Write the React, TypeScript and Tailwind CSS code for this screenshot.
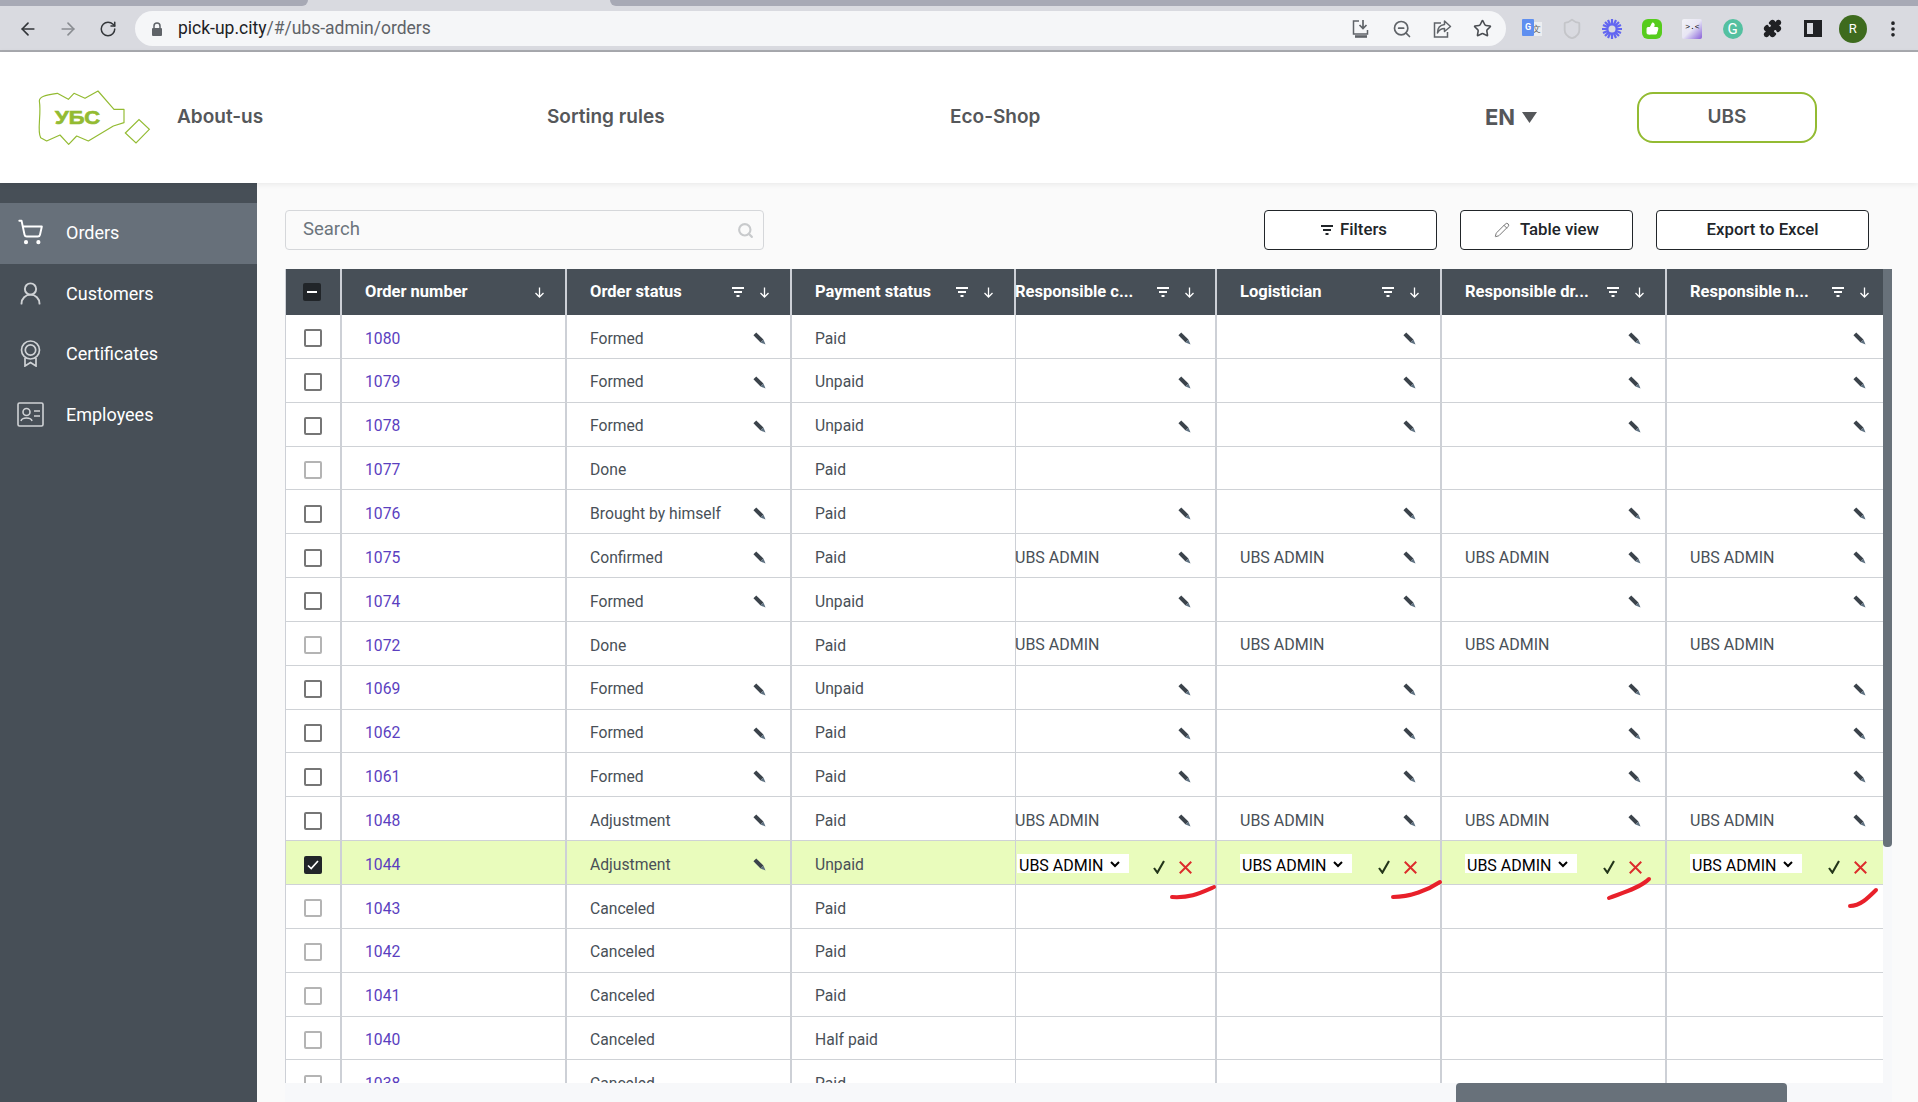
import React from "react";
import { ArrowLeft, ArrowRight, RotateCw, ZoomOut, Star, Search, ShoppingCart, UserRound, Shield, ThumbsUp, Puzzle, MoreVertical, Pencil } from "lucide-react";

type Row = { n: string; s: string; p: string; a?: boolean; edit: boolean; off?: boolean; sel?: boolean };
const rows: Row[] = [
  { n: "1080", s: "Formed", p: "Paid", edit: true },
  { n: "1079", s: "Formed", p: "Unpaid", edit: true },
  { n: "1078", s: "Formed", p: "Unpaid", edit: true },
  { n: "1077", s: "Done", p: "Paid", edit: false, off: true },
  { n: "1076", s: "Brought by himself", p: "Paid", edit: true },
  { n: "1075", s: "Confirmed", p: "Paid", a: true, edit: true },
  { n: "1074", s: "Formed", p: "Unpaid", edit: true },
  { n: "1072", s: "Done", p: "Paid", a: true, edit: false, off: true },
  { n: "1069", s: "Formed", p: "Unpaid", edit: true },
  { n: "1062", s: "Formed", p: "Paid", edit: true },
  { n: "1061", s: "Formed", p: "Paid", edit: true },
  { n: "1048", s: "Adjustment", p: "Paid", a: true, edit: true },
  { n: "1044", s: "Adjustment", p: "Unpaid", edit: true, sel: true },
  { n: "1043", s: "Canceled", p: "Paid", edit: false, off: true },
  { n: "1042", s: "Canceled", p: "Paid", edit: false, off: true },
  { n: "1041", s: "Canceled", p: "Paid", edit: false, off: true },
  { n: "1040", s: "Canceled", p: "Half paid", edit: false, off: true },
  { n: "1038", s: "Canceled", p: "Paid", edit: false, off: true },
];

const PencilSolid = () => (
  <svg width="13" height="13" viewBox="0 0 12 12" className="shrink-0">
    <path d="M0.4 3 L3 0.4 L9.6 7 L7 9.6 Z" fill="#3b434b" />
    <path d="M9.6 7 L11.6 11.6 L7 9.6 Z" fill="#5d7080" />
  </svg>
);
const FilterIcon = () => (
  <svg width="12" height="10" viewBox="0 0 12 10" className="shrink-0">
    <path d="M0 1h12M2 5h8M4.5 9h3" stroke="currentColor" strokeWidth="1.8" />
  </svg>
);
const DownArrow = () => (
  <svg width="11" height="11" viewBox="0 0 11 11" fill="none" className="shrink-0">
    <path d="M5.5 0.5V10M1.5 6l4 4 4-4" stroke="currentColor" strokeWidth="1.3" />
  </svg>
);
const Check = ({ sel, off }: { sel?: boolean; off?: boolean }) =>
  sel ? (
    <div className="w-[18px] h-[18px] rounded-[2px] bg-[#212529] flex items-center justify-center">
      <svg width="12" height="10" viewBox="0 0 12 10" fill="none"><path d="M1 5.5 L4.2 8.5 L11 1" stroke="#fff" strokeWidth="1.7" /></svg>
    </div>
  ) : (
    <div className={`w-[18px] h-[18px] rounded-[2px] border-2 bg-white ${off ? "border-[#b4b4b4]" : "border-[#767676]"}`} />
  );

const cols = [
  { t: "Order number", w: "w-[225px]", filter: false },
  { t: "Order status", w: "w-[225px]", filter: true },
  { t: "Payment status", w: "w-[224px]", filter: true },
  { t: "Responsible c...", w: "w-[201px]", filter: true, flush: true },
  { t: "Logistician", w: "w-[225px]", filter: true },
  { t: "Responsible dr...", w: "w-[225px]", filter: true },
  { t: "Responsible n...", w: "w-[225px]", filter: true },
];

const AdminCell = ({ r, w, flush }: { r: Row; w: string; flush?: boolean }) => {
  if (r.sel) {
    return (
      <div className={`${w} shrink-0 h-full border-r-2 border-[#cdd0d6] flex items-center justify-between pt-[4px] pr-[23px] ${flush ? "pl-px" : "pl-[23px]"}`}>
        <div className="w-[112px] h-[19px] bg-white -mt-[2px]">
          <select defaultValue="UBS ADMIN" className="-ml-[2px] w-[108px] h-[19px] bg-transparent text-black text-[16px] leading-[19px] border-0 outline-none">
            <option>UBS ADMIN</option>
          </select>
        </div>
        <div className="flex items-center gap-[14px] mt-[5px]">
          <svg width="12" height="14" viewBox="0 0 12 14" fill="none"><path d="M1 8 L4.4 12.6 L11 1" stroke="#23351a" strokeWidth="2.1" /></svg>
          <svg width="13" height="13" viewBox="0 0 12 12" fill="none"><path d="M0.7 0.7 L11.3 11.3 M11.3 0.7 L0.7 11.3" stroke="#dc2b2b" strokeWidth="1.8" /></svg>
        </div>
      </div>
    );
  }
  return (
    <div className={`${w} shrink-0 h-full border-r-2 border-[#cdd0d6] flex items-center justify-between pt-[4px] pr-[24px] ${flush ? "pl-0" : "pl-[23px]"}`}>
      <span className={flush ? "-ml-px" : ""}>{r.a ? "UBS ADMIN" : ""}</span>
      {r.edit && <PencilSolid />}
    </div>
  );
};

const Burst = () => (
  <svg width="20" height="20" viewBox="0 0 20 20" stroke="#6366f1" strokeWidth="2.2">
    <path d="M10 0v20M0 10h20M3 3l14 14M17 3L3 17M1 6l18 8M19 6L1 14M6 1l8 18M14 1L6 19" />
    <circle cx="10" cy="10" r="3.5" fill="#d9dae0" stroke="none" />
  </svg>
);

const InstallIcon = () => (
  <svg width="20" height="20" viewBox="0 0 20 20" fill="none" stroke="#5f6368" strokeWidth="1.5">
    <path d="M8 2H2.5v13h14V11" />
    <path d="M12 1v8M8.5 6l3.5 3.5L15.5 6" strokeWidth="1.7" />
    <path d="M4 17.5h12" strokeWidth="2.6" />
  </svg>
);
const ShareIcon = () => (
  <svg width="20" height="20" viewBox="0 0 20 20" fill="none" stroke="#5f6368" strokeWidth="1.5">
    <path d="M9 4H2.5v14h13v-5" />
    <path d="M12.5 2l6 5.5-6 5V9.5C9 9.5 7 11 5.5 14c0-5 2.5-8 7-8.5z" strokeLinejoin="round" />
  </svg>
);

const toolbarIcon = "w-[40.1px] h-[40px] flex items-center justify-center shrink-0";

function Chrome() {
  return (
    <div className="h-[52px] bg-[#d9dae0] border-b-2 border-[#a9abb0] relative shrink-0">
      <div className="h-[6px] flex">
        <div className="w-[308px] bg-[#a7a9b5] rounded-br-[8px]" />
        <div className="w-[302px]" />
        <div className="flex-1 bg-[#a7a9b5] rounded-bl-[8px]" />
      </div>
      <div className="flex items-center h-[35px] mt-[5px] pl-[8px]">
        <div className={"w-[40px] flex justify-center"}><ArrowLeft size={20} color="#33363a" strokeWidth={2} /></div>
        <div className={"w-[40px] flex justify-center"}><ArrowRight size={20} color="#8a8d92" strokeWidth={2} /></div>
        <div className={"w-[40px] flex justify-center"}><RotateCw size={18} color="#33363a" strokeWidth={2} /></div>
        <div className="ml-[7px] w-[1371px] h-[35px] rounded-full bg-[#f5f6f8] flex items-center pl-[16px] shrink-0">
          <svg width="12" height="14" viewBox="0 0 12 14" className="shrink-0">
            <path d="M3 6V4a3 3 0 016 0v2" fill="none" stroke="#5f6368" strokeWidth="1.5" />
            <rect x="1" y="6" width="10" height="8" rx="1" fill="#5f6368" />
          </svg>
          <span className="ml-[15px] text-[17.5px] font-['Roboto',sans-serif] text-[#5f6368]">
            <span className="text-[#202124]">pick-up.city</span>/#/ubs-admin/orders
          </span>
          <div className="ml-auto flex items-center pr-[3px]">
            <div className="w-[40.5px] flex justify-center"><InstallIcon /></div>
            <div className="w-[40.5px] flex justify-center"><ZoomOut size={20} color="#5f6368" /></div>
            <div className="w-[40.5px] flex justify-center"><ShareIcon /></div>
            <div className="w-[40.5px] flex justify-center"><Star size={19} color="#4a4d52" strokeWidth={2} /></div>
          </div>
        </div>
        <div className="flex items-center pl-[6px] shrink-0">
          <div className={toolbarIcon}>
            <div className="relative w-[20px] h-[20px]">
              <div className="absolute right-0 top-[3px] w-[12px] h-[14px] bg-[#eceef1] text-[9px] leading-[14px] text-center text-[#666]">文</div>
              <div className="absolute left-0 top-0 w-[12px] h-[17px] bg-[#5f8ff0] rounded-[1px] text-[9px] leading-[17px] text-center font-bold text-white font-['Roboto',sans-serif]">G</div>
            </div>
          </div>
          <div className={toolbarIcon}><Shield size={22} color="#c4c5c9" strokeWidth={2} /></div>
          <div className={toolbarIcon}><Burst /></div>
          <div className={toolbarIcon}>
            <div className="w-[20px] h-[20px] rounded-[6px] bg-[#56cc1d] flex items-center justify-center"><ThumbsUp size={13} color="#fff" fill="#fff" /></div>
          </div>
          <div className={toolbarIcon}>
            <div className="w-[20px] h-[20px] rounded-[2px] bg-gradient-to-br from-[#f2f3f7] via-[#e8e6f4] to-[#8a5cd6] text-[8px] leading-[16px] text-center text-black font-['Liberation_Mono',monospace]">&gt;.&lt;</div>
          </div>
          <div className={toolbarIcon}>
            <div className="w-[20px] h-[20px] rounded-full bg-[#54c0a0] text-white text-[15px] leading-[20px] text-center font-['Roboto',sans-serif]">G</div>
          </div>
          <div className={toolbarIcon}><Puzzle size={19} color="#202124" fill="#202124" /></div>
          <div className={toolbarIcon}>
            <div className="w-[18px] h-[17px] border-[3px] border-[#202124] flex justify-end"><div className="w-[6px] bg-[#202124]" /></div>
          </div>
          <div className={toolbarIcon}>
            <div className="w-[28px] h-[28px] rounded-full bg-[#3e6b1e] text-white text-[13px] leading-[28px] text-center font-['Roboto',sans-serif]">R</div>
          </div>
          <div className={toolbarIcon}><MoreVertical size={20} color="#202124" strokeWidth={2.4} /></div>
        </div>
      </div>
    </div>
  );
}

const Logo = () => (
  <svg width="150" height="75" viewBox="0 0 450 225" fill="none" className="shrink-0">
    <path d="M88 60 C88 48 100 43 142 37 L175 55 L192 37 L225 52 L264 30 L312 85 L342 85 L342 125 L310 135 L235 180 L200 165 L176 190 L150 162 L110 180 L92 170 C80 150 95 100 88 60 Z" stroke="#93bb32" strokeWidth="3.5" strokeLinejoin="round" />
    <path d="M346 156 L387 116 L418 145 L378 186 Z" stroke="#93bb32" strokeWidth="3.5" />
    <text x="135" y="130" fontFamily="Liberation Sans, sans-serif" fontWeight="700" fontSize="56" fill="#93bb32" textLength="135" lengthAdjust="spacingAndGlyphs" stroke="#93bb32" strokeWidth="2">УБС</text>
  </svg>
);

function Header() {
  const nav = "text-[19px] font-semibold text-[#55575a] font-['Inter',sans-serif]";
  return (
    <header className="h-[131px] bg-white flex items-center shrink-0 shadow-[0_1px_6px_rgba(0,0,0,0.08)] relative z-10 pl-[10px]">
      <div className="mt-[1px] w-[167px]"><Logo /></div>
      <a className={`${nav} w-[370px]`}>About-us</a>
      <a className={`${nav} w-[403px]`}>Sorting rules</a>
      <a className={`${nav} w-[535px]`}>Eco-Shop</a>
      <div className="w-[152px] flex items-center gap-[7px] text-[22px] font-bold text-[#55575a] font-['Inter',sans-serif]">
        EN
        <svg width="15" height="11" viewBox="0 0 15 11"><path d="M0 0h15L7.5 11z" fill="#55575a" /></svg>
      </div>
      <button className="w-[180px] h-[51px] rounded-[16px] border-2 border-[#93bb32] bg-white text-[19px] font-semibold text-[#55575a] font-['Inter',sans-serif]">UBS</button>
    </header>
  );
}

const IdCard = () => (
  <svg width="27" height="25" viewBox="0 0 27 25" fill="none" stroke="#cfd2d5" strokeWidth="1.6">
    <rect x="1" y="1" width="25" height="23" rx="1.5" />
    <circle cx="9.5" cy="10" r="3.5" />
    <path d="M4 19c1-4 10-4 11 0M17 9h6M17 14h6" />
  </svg>
);
const Medal = () => (
  <svg width="21" height="27" viewBox="0 0 21 27" fill="none" stroke="#cfd2d5" strokeWidth="1.7">
    <circle cx="10.5" cy="10" r="9" />
    <circle cx="10.5" cy="10" r="5.2" />
    <path d="M5 18v8l5.5-3.5 5.5 3.5v-8" />
  </svg>
);

const sideItems = [
  { t: "Orders", i: <ShoppingCart size={28} color="#fff" strokeWidth={1.7} />, on: true },
  { t: "Customers", i: <UserRound size={27} color="#cfd2d5" strokeWidth={1.7} /> },
  { t: "Certificates", i: <Medal /> },
  { t: "Employees", i: <IdCard /> },
];

function Sidebar() {
  return (
    <aside className="w-[257px] shrink-0 bg-[#474f57] pt-[20px]">
      {sideItems.map((s) => (
        <div key={s.t} className={`h-[60.8px] flex items-center pl-[17px] pb-[2px] text-[18px] text-white font-['Roboto',sans-serif] ${s.on ? "bg-[#67707a]" : ""}`}>
          <div className="w-[27px] flex justify-center">{s.i}</div>
          <span className="ml-[22px]">{s.t}</span>
        </div>
      ))}
    </aside>
  );
}

function Table() {
  return (
    <div className="relative w-[1607px] h-[833px] bg-[#f7f8fa]">
      <div className="w-[1598px] h-[814px] overflow-hidden bg-white border-l border-[#cdd0d6] text-[16px] text-[#495057]">
        <div className="w-[1606px]">
          <div className="h-[46px] flex bg-[#474f57] text-white font-medium">
            <div className="w-[56px] shrink-0 border-r-2 border-[#cdd0d6] flex items-center justify-center pr-[2px]">
              <div className="w-[18px] h-[18px] rounded-[2px] bg-[#212529] flex items-center justify-center"><div className="w-[10px] h-[2px] bg-white" /></div>
            </div>
            {cols.map((c) => (
              <div key={c.t} className={`${c.w} shrink-0 border-r-2 border-[#cdd0d6] flex items-center pr-[20px] ${c.flush ? "pl-0" : "pl-[23px]"}`}>
                <span className={`font-bold text-[16.5px] whitespace-nowrap ${c.flush ? "-ml-px" : ""}`}>{c.t}</span>
                <div className="ml-auto flex items-center gap-[15px]">
                  {c.filter && <FilterIcon />}
                  <DownArrow />
                </div>
              </div>
            ))}
          </div>
          {rows.map((r) => (
            <div key={r.n} className={`h-[43.85px] flex items-center border-b border-[#cfd2d6] ${r.sel ? "bg-[#e9fcbc]" : "bg-white"}`}>
              <div className="w-[56px] shrink-0 h-full border-r-2 border-[#cdd0d6] flex items-center justify-center pt-[4px]">
                <Check sel={r.sel} off={r.off} />
              </div>
              <div className="w-[225px] shrink-0 h-full border-r-2 border-[#cdd0d6] flex items-center pt-[4px] pl-[23px] text-[15.7px] text-[#5b3fbf]">{r.n}</div>
              <div className="w-[225px] shrink-0 h-full border-r-2 border-[#cdd0d6] flex items-center justify-between pt-[4px] pl-[23px] pr-[24px]">
                <span className="text-[15.7px]">{r.s}</span>
                {r.edit && <PencilSolid />}
              </div>
              <div className="w-[224px] shrink-0 h-full border-r border-[#cdd0d6] flex items-center pt-[4px] pl-[23px] text-[15.7px]">{r.p}</div>
              <AdminCell r={r} w="w-[201px]" flush />
              <AdminCell r={r} w="w-[225px]" />
              <AdminCell r={r} w="w-[225px]" />
              <AdminCell r={r} w="w-[225px]" />
            </div>
          ))}
        </div>
      </div>
      <div className="absolute right-0 top-0 w-[9px] h-[578px] bg-[#68717a] rounded-b-[4px]" />
      <div className="absolute left-[1171px] top-[814px] w-[331px] h-[19px] bg-[#68717a] rounded-t-[4px]" />
      <svg className="absolute left-0 top-0 pointer-events-none" width="1607" height="833" fill="none">
        <g transform="translate(-285 -269)" stroke="#e8202a" strokeWidth="4" strokeLinecap="round">
          <path d="M1172 897 C1190 898 1198 894 1214 887" />
          <path d="M1393 897 C1410 897 1428 890 1440 882" />
          <path d="M1609 898 C1622 893 1640 888 1649 879" />
          <path d="M1850 906 C1860 906 1868 898 1876 890" />
        </g>
      </svg>
    </div>
  );
}

export default function App() {
  const btn = "h-[40px] rounded-[4px] border border-[#212529] bg-white text-[16.8px] font-medium text-[#212529] flex items-center justify-center shrink-0";
  return (
    <div className="w-[1918px] h-[1102px] overflow-hidden flex flex-col bg-[#fafafa] font-['Roboto',sans-serif]">
      <Chrome />
      <Header />
      <div className="flex flex-1 min-h-0">
        <Sidebar />
        <main className="flex-1 pl-[28px] pt-[27px]">
          <div className="flex items-center h-[40px] mb-[19px]">
            <div className="w-[479px] h-[40px] rounded-[4px] border border-[#d5d7da] bg-[#fafafa] flex items-center justify-between pl-[17px] pr-[9px] text-[18.5px] text-[#6c757d]">
              <span>Search</span>
              <Search size={17} color="#c8cacc" strokeWidth={3} />
            </div>
            <button className={`${btn} w-[173px] ml-[500px] gap-[7px] pl-[7px]`}><FilterIcon />Filters</button>
            <button className={`${btn} w-[173px] ml-[23px] gap-[10px]`}><Pencil size={16} color="#777" strokeWidth={1.5} className="-scale-x-100 rotate-90" />Table view</button>
            <button className={`${btn} w-[213px] ml-[23px]`}>Export to Excel</button>
          </div>
          <Table />
        </main>
      </div>
    </div>
  );
}
